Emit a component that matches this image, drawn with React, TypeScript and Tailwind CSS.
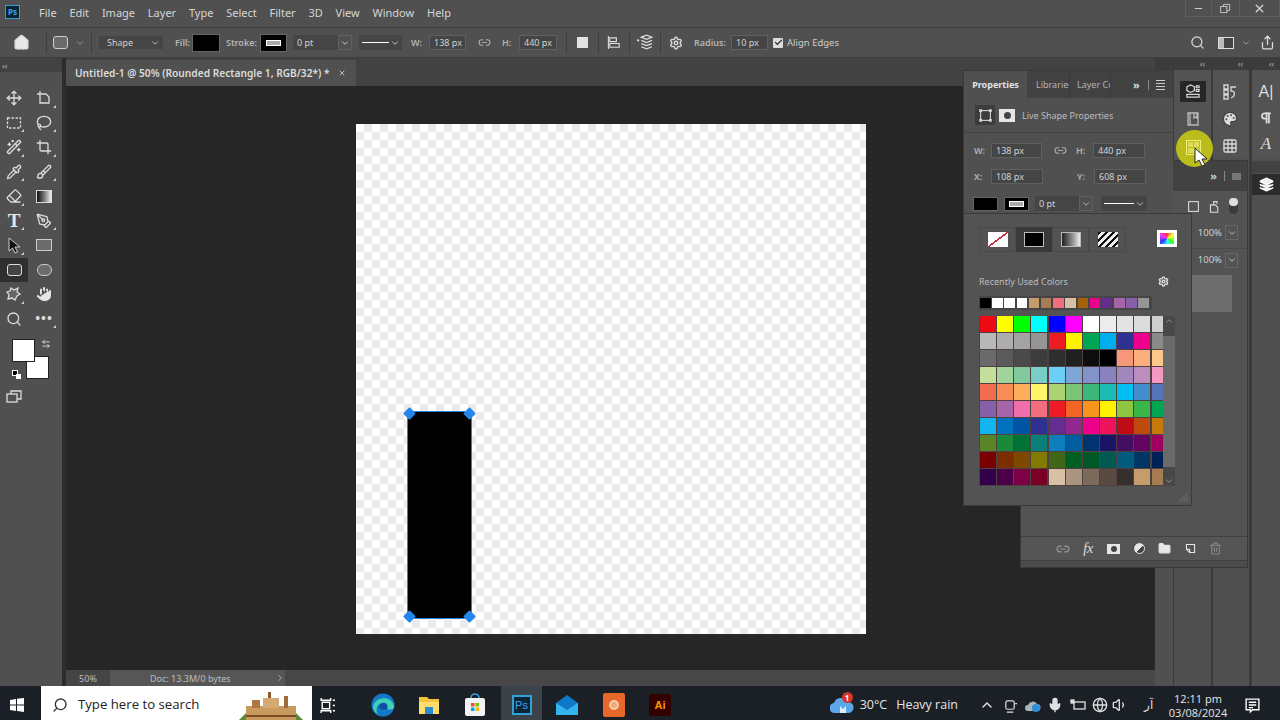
import React from "react";
import {
  Brush,
  ChevronDown,
  ChevronRight,
  ChevronUp,
  Crop,
  Eraser,
  Hand,
  Lasso,
  Link2,
  Mic,
  Minus,
  Move,
  PenTool,
  Pipette,
  Search,
  Settings,
  Share,
  Volume1,
  Globe,
  WandSparkles,
  X,
  Home,
  Check,
  ArrowLeftRight,
  Palette,
  Grid3x3,
  Pilcrow,
  Layers,
  Folder,
  Trash2,
} from "lucide-react";

const MENU = ["File", "Edit", "Image", "Layer", "Type", "Select", "Filter", "3D", "View", "Window", "Help"];

const RECENT = ["#000000", "#ffffff", "#ffffff", "#ffffff", "#c69c6d", "#a67c52", "#f26d7d", "#d7c0a4", "#a36209", "#ec008c", "#662d91", "#a864a8", "#855fa8", "#959595"];

const SWATCHES = [
  ["#ed0a12", "#ffff00", "#00ff00", "#00ffff", "#0000ff", "#ff00ff", "#ffffff", "#ececec", "#e3e3e3", "#dcdcdc", "#cfcfcf"],
  ["#b8b8b8", "#adadad", "#a3a3a3", "#959595", "#ed1c24", "#fff200", "#00a651", "#00aeef", "#2e3192", "#ec008c", "#8a8a8a"],
  ["#6a6a6a", "#5a5a5a", "#4a4a4a", "#3c3c3c", "#2e2e2e", "#202020", "#0d0d0d", "#000000", "#f7977a", "#fbaf7d", "#fdc68a"],
  ["#c4df9b", "#a3d39c", "#82ca9d", "#7bcdc8", "#6dcff6", "#7ea7d8", "#8493ca", "#8882be", "#a187be", "#bc8dbf", "#f49ac2"],
  ["#f26c4f", "#f68e56", "#fbaf5d", "#fff568", "#acd373", "#7cc576", "#3cb878", "#1cbbb4", "#00bff3", "#448ccb", "#5574b9"],
  ["#855fa8", "#a864a8", "#f06eaa", "#f26d7d", "#ed1c24", "#f26522", "#f7941d", "#fff200", "#8dc63f", "#39b54a", "#00a651"],
  ["#12b5f0", "#0072bc", "#0054a6", "#2e3192", "#662d91", "#92278f", "#ec008c", "#ed145b", "#c00a16", "#bf4a10", "#c77a0a"],
  ["#598527", "#1a8a3a", "#007236", "#0b8078", "#0e7ebc", "#005e9e", "#003471", "#1b1464", "#440e62", "#630460", "#9e005d"],
  ["#790000", "#7b2e00", "#7d4900", "#827b00", "#406618", "#005e20", "#005826", "#005952", "#005b7f", "#003663", "#002157"],
  ["#32004b", "#4b0049", "#7b0046", "#7a0026", "#d7c0a4", "#a99580", "#7d6b59", "#594a42", "#362f2d", "#c69c6d", "#a67c52"],
];

// Small drawn icons that the packages do not have
const Svg: React.FC<{ size?: number; children: React.ReactNode; className?: string }> = ({ size = 16, children, className }) => (
  <svg width={size} height={size} viewBox="0 0 16 16" fill="none" stroke="currentColor" strokeWidth="1.3" className={`shrink-0 ${className ?? ""}`}>
    {children}
  </svg>
);

const Divider: React.FC<{ ml: string }> = ({ ml }) => <div className={`h-[22px] w-px shrink-0 bg-[#3f3f3f] ${ml}`} />;

const Label: React.FC<{ text: string; className?: string }> = ({ text, className }) => (
  <span className={`shrink-0 whitespace-nowrap text-[9px] leading-none text-[#b4b4b4] font-semibold ${className ?? ""}`}>{text}</span>
);

const Field: React.FC<{ text: string; className?: string }> = ({ text, className }) => (
  <div className={`flex h-[15px] shrink-0 items-center border border-[#5f5f5f] bg-[#454545] pl-[4px] text-[9px] leading-none text-[#d2d2d2] ${className ?? ""}`}>
    {text}
  </div>
);

const StrokeSwatch: React.FC<{ className?: string }> = ({ className }) => (
  <div className={`flex shrink-0 items-center justify-center border border-[#666] bg-black ${className ?? ""}`}>
    <div className="h-[6px] w-[15px] border border-white bg-[#aaa]" />
  </div>
);

const Tool: React.FC<{ children: React.ReactNode; active?: boolean; corner?: boolean }> = ({ children, active, corner }) => (
  <div className={`relative flex h-[24.5px] items-center justify-center text-[#dcdcdc] ${active ? "bg-[#2f2f2f]" : ""}`}>
    {children}
    {corner && <div className="absolute bottom-[3px] right-[4px] h-0 w-0 border-b-[3px] border-l-[3px] border-b-[#ccc] border-l-transparent" />}
  </div>
);

const DockHeader: React.FC<{ className?: string }> = ({ className }) => (
  <div className={`flex h-[12px] items-center justify-end bg-[#3c3c3c] pr-[6px] text-[8px] leading-none text-[#bbb] ${className ?? ""}`}>
    ‹‹
  </div>
);

const ToolBar: React.FC = () => (
  <div className="flex w-[66px] flex-col border-r-[4px] border-[#2c2c2c] bg-[#505050]">
    <div className="flex h-[14px] items-center bg-[#424242] pl-[2px] text-[9px] leading-none text-[#bbb]">‹‹</div>
    <div className="grid w-[60px] grid-cols-[28px_32px] pt-[14px]">
      <Tool><Move size={16} /></Tool>
      <Tool corner>
        <Svg><path d="M4 1v3M1 4h3M4 4h6l3 3v6H4z" /></Svg>
      </Tool>
      <Tool corner>
        <Svg><rect x="1.5" y="3" width="13" height="10" strokeDasharray="2.4 1.6" /></Svg>
      </Tool>
      <Tool corner><Lasso size={16} /></Tool>
      <Tool corner><WandSparkles size={16} /></Tool>
      <Tool corner><Crop size={16} /></Tool>
      <Tool corner><Pipette size={16} /></Tool>
      <Tool corner><Brush size={16} /></Tool>
      <Tool corner><Eraser size={16} /></Tool>
      <Tool>
        <div className="h-[13px] w-[16px] border border-[#ddd] bg-gradient-to-r from-[#111] to-[#eee]" />
      </Tool>
      <Tool corner>
        <span className="font-['Liberation_Serif',serif] text-[19px] font-bold leading-none text-[#e6e6e6]">T</span>
      </Tool>
      <Tool corner><PenTool size={16} /></Tool>
      <Tool corner>
        <svg width="14" height="17" viewBox="0 0 14 17">
          <path d="M2 1v13l3.500-3 2.500 5 2.500-1-2.500-5H13z" fill="#111" stroke="#ccc" strokeWidth="1" />
        </svg>
      </Tool>
      <Tool>
        <div className="h-[12px] w-[16px] border border-[#ccc] bg-[#6c6c6c]" />
      </Tool>
      <Tool active>
        <div className="h-[12px] w-[15px] rounded-[3px] border border-[#ddd] bg-[#444]" />
      </Tool>
      <Tool>
        <div className="h-[12px] w-[15px] rounded-full border border-[#ccc] bg-[#6c6c6c]" />
      </Tool>
      <Tool corner>
        <Svg>
          <path d="M5 2l3 2 4-2-1 4 3 2-3 2-2 4-3-2-4 1 1-4-2-3 3-1z" fill="#666" />
        </Svg>
      </Tool>
      <Tool><Hand size={18} fill="#e6e6e6" strokeWidth={1.4} className="text-[#505050]" /></Tool>
      <Tool><Search size={16} /></Tool>
      <Tool corner><span className="text-[13px] font-bold leading-none tracking-[1px]">•••</span></Tool>
    </div>
    <div className="relative ml-[12px] mt-[8px] h-[42px] w-[38px]">
      <div className="absolute left-[14px] top-[17px] h-[23px] w-[23px] border border-[#222] bg-white" />
      <div className="absolute left-0 top-0 h-[23px] w-[23px] border border-[#222] bg-white" />
      <ArrowLeftRight size={10} className="absolute left-[29px] top-[0px] text-[#e6e6e6]" />
      <div className="absolute left-[0px] top-[31px] h-[6px] w-[6px] border border-white bg-black" />
      <div className="absolute left-[4px] top-[35px] h-[5px] w-[5px] bg-white" />
    </div>
    <div className="ml-[6px] mt-[8px] text-[#dcdcdc]">
      <Svg><rect x="1" y="5" width="10" height="8" /><path d="M5 5V2h10v8h-4" /></Svg>
    </div>
  </div>
);

const OptionsBar: React.FC = () => (
  <div className="flex h-[31px] items-center border-y border-[#3e3e3e] bg-[#505050] text-[#dcdcdc]">
    <Home size={17} fill="#e8e8e8" className="ml-[13px] shrink-0" />
    <Divider ml="ml-[16px]" />
    <div className="ml-[6px] h-[13px] w-[15px] shrink-0 rounded-[3px] border border-[#cfcfcf] bg-[#6b6b6b]" />
    <ChevronDown size={10} className="ml-[7px] shrink-0 text-[#aaa]" />
    <Divider ml="ml-[6px]" />
    <div className="ml-[7px] flex h-[13px] w-[64px] shrink-0 items-center justify-between bg-[#454545] pl-[8px] pr-[3px] text-[9px] leading-none text-[#cfcfcf]">
      Shape <ChevronDown size={10} />
    </div>
    <Label text="Fill:" className="ml-[12px] w-[13px]" />
    <div className="ml-[4px] h-[18px] w-[28px] shrink-0 border border-[#666] bg-black" />
    <Label text="Stroke:" className="ml-[6px] w-[29px]" />
    <StrokeSwatch className="ml-[5px] h-[18px] w-[27px]" />
    <Field text="0 pt" className="ml-[6px] w-[45px] border-0 pl-[3px]" />
    <div className="flex h-[15px] w-[14px] shrink-0 items-center justify-center border border-[#5f5f5f]"><ChevronDown size={10} /></div>
    <div className="ml-[7px] flex h-[15px] w-[43px] shrink-0 items-center justify-between bg-[#454545] pl-[3px] pr-[2px]">
      <div className="h-[1.5px] w-[27px] bg-white" /><ChevronDown size={10} />
    </div>
    <Label text="W:" className="ml-[9px] w-[11px]" />
    <Field text="138 px" className="ml-[7px] w-[37px]" />
    <Link2 size={13} className="ml-[12px] shrink-0 text-[#aaa]" />
    <Label text="H:" className="ml-[11px] w-[10px]" />
    <Field text="440 px" className="ml-[7px] w-[38px]" />
    <Divider ml="ml-[9px]" />
    <div className="ml-[10px] h-[11px] w-[11px] shrink-0 bg-[#e2e2e2]" />
    <Divider ml="ml-[10px]" />
    <Svg size={15} className="ml-[8px]">
      <path d="M1.5 1v14M3 3h7v4H3zM3 9h10v4H3z" strokeWidth="1.2" />
    </Svg>
    <Divider ml="ml-[7px]" />
    <Svg size={17} className="ml-[6px]">
      <path d="M5 3l5-2 5 2-5 2zM5 6l5 2 5-2M5 9l5 2 5-2M5 12l5 2 5-2M1 6h2M2 5v2" strokeWidth="1.2" />
    </Svg>
    <Divider ml="ml-[7px]" />
    <Settings size={14} className="ml-[8px] shrink-0" strokeWidth={2.4} />
    <Label text="Radius:" className="ml-[11px] w-[31px]" />
    <Field text="10 px" className="ml-[6px] w-[37px]" />
    <div className="ml-[5px] flex h-[10px] w-[10px] shrink-0 items-center justify-center rounded-[1px] bg-[#dcdcdc]">
      <Check size={9} strokeWidth={3.5} className="text-[#333]" />
    </div>
    <span className="ml-[4px] whitespace-nowrap text-[9.5px] leading-none text-[#cfcfcf]">Align Edges</span>
    <div className="flex-1" />
    <Search size={15} />
    <div className="ml-[13px] h-[12px] w-[16px] border border-[#ddd] bg-[#444]">
      <div className="h-full w-[5px] bg-[#bbb]" />
    </div>
    <ChevronDown size={10} className="ml-[7px] text-[#aaa]" />
    <Share size={15} className="ml-[9px] mr-[5px]" />
  </div>
);

const Canvas: React.FC = () => (
  <div className="flex flex-1 items-center justify-center bg-[#262626] pt-[2px]">
    <div className="relative h-[510px] w-[510px] bg-[repeating-conic-gradient(#ebebeb_0_25%,#ffffff_0_50%)] bg-[length:16px_16px]">
      <div className="absolute left-[51px] top-[287px] h-[208px] w-[65px] rounded-[8px] border border-[#2d83e0] bg-black" />
      <div className="absolute left-[49px] top-[285px] h-[9px] w-[9px] rotate-45 rounded-[1px] bg-[#2586ea]" />
      <div className="absolute left-[109px] top-[285px] h-[9px] w-[9px] rotate-45 rounded-[1px] bg-[#2586ea]" />
      <div className="absolute left-[49px] top-[488px] h-[9px] w-[9px] rotate-45 rounded-[1px] bg-[#2586ea]" />
      <div className="absolute left-[109px] top-[488px] h-[9px] w-[9px] rotate-45 rounded-[1px] bg-[#2586ea]" />
    </div>
  </div>
);

const PropertiesPanel: React.FC = () => (
  <div className="absolute left-[963px] top-[70px] h-[144px] w-[210px] border-l border-t border-[#3a3a3a] bg-[#505050]">
    <div className="flex h-[27px] items-center bg-[#424242] text-[9px] leading-none">
      <div className="flex h-full w-[63px] items-center justify-center bg-[#505050] font-bold text-[#e2e2e2]">Properties</div>
      <div className="flex h-full w-[43px] items-center overflow-hidden whitespace-nowrap border-r border-[#3a3a3a] pl-[9px] text-[#b4b4b4]">Libraries</div>
      <div className="flex h-full w-[41px] items-center overflow-hidden whitespace-nowrap border-r border-[#3a3a3a] pl-[7px] text-[#b4b4b4]">Layer Comps</div>
      <span className="ml-[22px] text-[11px] font-bold text-[#ddd]">»</span>
      <div className="ml-[8px] h-[10px] w-px bg-[#888]" />
      <div className="ml-[7px] flex w-[9px] flex-col gap-[2px]">
        <div className="h-px bg-[#ccc]" /><div className="h-px bg-[#ccc]" /><div className="h-px bg-[#ccc]" /><div className="h-px bg-[#ccc]" />
      </div>
    </div>
    <div className="flex h-[35px] items-center border-b border-[#424242] pl-[11px]">
      <div className="flex h-[20px] w-[20px] items-center justify-center bg-[#3c3c3c] text-[#ddd]">
        <Svg size={13}><rect x="2" y="2" width="12" height="12" /><path d="M1 1h2v2H1zM13 1h2v2h-2zM1 13h2v2H1zM13 13h2v2h-2z" /></Svg>
      </div>
      <div className="ml-[4px] flex h-[13px] w-[16px] items-center justify-center bg-[#e6e6e6]"><div className="h-[7px] w-[7px] rounded-full bg-[#444]" /></div>
      <span className="ml-[7px] text-[9px] leading-none text-[#bdbdbd]">Live Shape Properties</span>
    </div>
    <div className="flex items-center pt-[10px] pl-[10px]">
      <Label text="W:" className="w-[17px]" />
      <Field text="138 px" className="w-[51px]" />
      <Link2 size={13} className="ml-[12px] text-[#aaa]" />
      <Label text="H:" className="ml-[9px] w-[17px]" />
      <Field text="440 px" className="w-[52px]" />
    </div>
    <div className="flex items-center pt-[11px] pl-[10px]">
      <Label text="X:" className="w-[17px]" />
      <Field text="108 px" className="w-[52px]" />
      <Label text="Y:" className="ml-[34px] w-[17px]" />
      <Field text="608 px" className="w-[52px]" />
    </div>
    <div className="flex items-center pt-[12px] pl-[9px]">
      <div className="h-[14px] w-[25px] border border-[#666] bg-black" />
      <StrokeSwatch className="ml-[6px] h-[14px] w-[25px]" />
      <Field text="0 pt" className="ml-[6px] w-[44px] border-0" />
      <div className="flex h-[15px] w-[14px] items-center justify-center border border-[#5f5f5f] text-[#ccc]"><ChevronDown size={10} /></div>
      <div className="ml-[8px] flex h-[15px] w-[46px] items-center justify-between bg-[#454545] pl-[3px] pr-[2px] text-[#ccc]">
        <div className="h-[1.5px] w-[30px] bg-white" /><ChevronDown size={10} />
      </div>
    </div>
  </div>
);

const ColorPopover: React.FC = () => (
  <div className="absolute left-[963px] top-[213px] flex h-[293px] w-[229px] flex-col border border-[#3a3a3a] bg-[#535353] pl-[15px]">
    <div className="flex pt-[13px]">
      <div className="flex h-[25px] w-[37px] items-center justify-center border border-[#4a4a4a]">
        <div className="h-[15px] w-[20px] bg-[linear-gradient(to_top_left,#fff_47%,#c03040_47%,#c03040_53%,#fff_53%)]" />
      </div>
      <div className="flex h-[25px] w-[36px] items-center justify-center bg-[#3a3a3a]">
        <div className="h-[15px] w-[20px] border border-[#bbb] bg-black" />
      </div>
      <div className="flex h-[25px] w-[37px] items-center justify-center border border-[#4a4a4a]">
        <div className="h-[15px] w-[20px] border border-[#bbb] bg-gradient-to-r from-[#222] to-[#eee]" />
      </div>
      <div className="flex h-[25px] w-[37px] items-center justify-center border border-[#4a4a4a]">
        <div className="h-[15px] w-[20px] bg-[repeating-linear-gradient(135deg,#111_0_2.5px,#eee_2.5px_5px)]" />
      </div>
      <div className="ml-[31px] mt-[3px] flex h-[17px] w-[20px] items-center justify-center bg-white">
        <div className="h-[11px] w-[14px] bg-[conic-gradient(#f33,#ff3,#3f3,#3ff,#33f,#f3f,#f33)]" />
      </div>
    </div>
    <div className="flex items-center pt-[24px]">
      <span className="w-[88px] whitespace-nowrap text-[9px] leading-none text-[#bdbdbd]">Recently Used Colors</span>
      <Settings size={11} strokeWidth={3} className="ml-[91px] text-[#ddd]" />
    </div>
    <div className="mt-[9px] flex h-[14px] w-[173px] items-center gap-[1.7px] bg-[#454545] pl-[1px]">
      {RECENT.map((color, i) => (
        <div key={i} className="h-[10px] w-[10.5px]" style={{ backgroundColor: color }} />
      ))}
    </div>
    <div className="mt-[6px] flex h-[170px]">
      <div className="flex w-[184px] flex-col gap-[1px] overflow-hidden bg-[#4d4141] pl-[1px]">
        {SWATCHES.map((row, r) => (
          <div key={r} className="flex gap-[1.2px]">
            {row.map((color, c) => (
              <div key={c} className={`h-[16px] ${c === 10 ? "w-[11.5px]" : "w-[16px]"}`} style={{ backgroundColor: color }} />
            ))}
          </div>
        ))}
      </div>
      <div className="flex w-[12px] flex-col items-center justify-between bg-[#484848] text-[#999]">
        <ChevronUp size={10} />
        <div className="h-[131px] w-full bg-[#6a6a6a]" />
        <ChevronDown size={10} />
      </div>
    </div>
    <Svg size={11} className="absolute bottom-[2px] right-[2px] text-[#777]"><path d="M2 14L14 2M6 15l9-9M10 15l5-5" /></Svg>
  </div>
);

const FooterSlot: React.FC<{ children: React.ReactNode }> = ({ children }) => (
  <div className="flex w-[25.5px] items-center justify-center">{children}</div>
);

const LayersPanel: React.FC = () => (
  <div className="absolute left-[1020px] top-[160px] flex h-[408px] w-[228px] flex-col border border-[#3a3a3a] bg-[#535353] text-[#cfcfcf]">
    <div className="flex h-[30px] shrink-0 items-center justify-end bg-[#424242] pr-[6px]">
      <span className="text-[11px] font-bold">»</span>
      <div className="ml-[7px] h-[10px] w-px bg-[#888]" />
      <div className="ml-[7px] h-[7px] w-[9px] bg-[#777]" />
    </div>
    <div className="flex h-[26px] items-center justify-end gap-[8px] pr-[9px] pt-[4px] text-[#ddd]">
      <Svg size={13}><rect x="2" y="2" width="12" height="12" /></Svg>
      <Svg size={13}><path d="M3 6h6l3 3v6H3zM7 6V2h4v3" /></Svg>
      <div className="flex h-[16px] w-[9px] flex-col items-center rounded-full bg-[#3c3c3c]"><div className="h-[8px] w-[9px] rounded-full bg-[#ddd]" /></div>
    </div>
    <div className="flex h-[32px] items-center justify-end gap-[3px] border-b border-[#484848] pr-[9px]">
      <span className="text-[9.5px] leading-none">100%</span>
      <div className="flex h-[15px] w-[13px] items-center justify-center border border-[#666]"><ChevronDown size={10} /></div>
    </div>
    <div className="flex h-[22px] items-center justify-end gap-[3px] pr-[9px]">
      <span className="text-[9.5px] leading-none">100%</span>
      <div className="flex h-[15px] w-[13px] items-center justify-center border border-[#666]"><ChevronDown size={10} /></div>
    </div>
    <div className="ml-[171px] mt-[4px] h-[37px] w-[40px] bg-[#6e6e6e]" />
    <div className="flex-1" />
    <div className="flex h-[25px] items-center border-y border-[#404040] bg-[#555] pl-[29px]">
      <FooterSlot><Link2 size={14} className="text-[#999]" /></FooterSlot>
      <FooterSlot><span className="font-['Liberation_Serif',serif] text-[14px] italic leading-none text-[#e2e2e2]">fx</span></FooterSlot>
      <FooterSlot><div className="flex h-[10px] w-[13px] items-center justify-center bg-[#e6e6e6]"><div className="h-[6px] w-[6px] rounded-full bg-[#444]" /></div></FooterSlot>
      <FooterSlot><div className="h-[11px] w-[11px] rounded-full border border-[#e6e6e6] bg-[linear-gradient(135deg,#e6e6e6_50%,#444_50%)]" /></FooterSlot>
      <FooterSlot><Folder size={13} fill="#e6e6e6" className="text-[#e6e6e6]" /></FooterSlot>
      <FooterSlot><Svg size={13} className="text-[#e6e6e6]"><path d="M3 3h10v10H7l-4-4zM3 9h4v4" /></Svg></FooterSlot>
      <FooterSlot><Trash2 size={13} className="text-[#888]" /></FooterSlot>
    </div>
    <div className="h-[6px] bg-[#4c4c4c]" />
  </div>
);

const RightDock: React.FC = () => (
  <div className="flex w-[125px] bg-[#3a3a3a]">
    <div className="flex w-[18px] flex-col">
      <div className="h-[12px] bg-[#3c3c3c]" />
      <div className="flex-1 bg-[#505050]" />
    </div>
    <div className="flex w-[38px] flex-col border-l border-[#3a3a3a]">
      <DockHeader />
      <div className="flex h-[88px] flex-col items-center bg-[#535353] pt-[11px] text-[#d8d8d8]">
        <div className="flex h-[21px] w-[26px] items-center justify-center rounded-[1px] bg-[#262626]">
          <Svg size={15}><path d="M2 3l4-2 4 2v4l-4 2-4-2zM12 2h3v2h-3zM12 6h3v2h-3zM2 11h13v3H2z" /></Svg>
        </div>
        <Svg size={16} className="mt-[9px] text-[#bbb]"><path d="M3 2h10v12H3zM5 2v12M9 2v5l1.500-1 1.500 1V2" /></Svg>
      </div>
      <div className="flex-1 bg-[#505050]" />
    </div>
    <div className="flex w-[38px] flex-col border-l-2 border-[#3a3a3a]">
      <DockHeader />
      <div className="flex h-[88px] flex-col items-center gap-[11px] bg-[#535353] pt-[14px] pr-[3px] text-[#d8d8d8]">
        <Svg size={16}><path d="M2 1h4v4H2zM2 6h4v4H2zM2 11h4v4H2zM14 3H9v4c4-1 5 5 0 7" /></Svg>
        <Palette size={16} fill="#ddd" className="text-[#444]" />
        <Grid3x3 size={16} />
      </div>
      <div className="flex-1 bg-[#505050]" />
    </div>
    <div className="flex w-[31px] flex-col border-l-[3px] border-[#3a3a3a] bg-[#505050]">
      <DockHeader />
      <div className="flex h-[88px] flex-col items-center bg-[#535353] pt-[14px] text-[#dcdcdc]">
        <span className="font-['Liberation_Sans',sans-serif] text-[16px] leading-none">A|</span>
        <Pilcrow size={14} className="mt-[11px]" strokeWidth={3} />
        <span className="mt-[10px] font-['Liberation_Serif',serif] text-[17px] italic leading-none">A</span>
      </div>
      <div className="mt-[3px] h-[12px] bg-[#424242]" />
      <div className="mt-[1px] flex h-[21px] items-center justify-center bg-[#2c2c2c] text-white">
        <Layers size={15} fill="#eee" />
      </div>
    </div>
  </div>
);

const Cursor: React.FC = () => (
  <div className="absolute left-[1176px] top-[130px] flex h-[37px] w-[37px] items-center justify-center rounded-full bg-[#bcbc1c]">
    <div className="-mt-[3px] -ml-[3px] grid h-[15px] w-[15px] grid-cols-2 gap-[1px] border border-[#f1ef75] p-[1px]">
      <div className="bg-[#dedb5a]" /><div className="bg-[#dedb5a]" /><div className="col-span-2 bg-[#dedb5a]" />
    </div>
    <svg width="15" height="20" viewBox="0 0 15 20" className="absolute left-[18px] top-[17px]">
      <path d="M1 1v15l4-3 3 6 3-1-3-6h5z" fill="#fff" stroke="#222" strokeWidth="1" />
    </svg>
  </div>
);

const TaskBar: React.FC = () => (
  <div className="flex h-[34px] items-center bg-[#1b2027] pt-[4px] font-['Open_Sans',sans-serif] text-white">
    <svg width="14" height="14" viewBox="0 0 14 14" className="ml-[10px]">
      <path d="M0 2l6-1v5.500H0zM7 .8L14 0v6.500H7zM0 7.500h6V13l-6-1zM7 7.500h7V14l-7-1z" fill="#fff" />
    </svg>
    <div className="ml-[17px] -mt-[4px] flex h-[34px] w-[271px] items-center overflow-hidden bg-white pt-[4px] text-[#222]">
      <Search size={16} className="ml-[11px] -scale-x-100 text-[#333]" />
      <span className="ml-[10px] w-[121px] whitespace-nowrap text-[13.2px] leading-none">Type here to search</span>
      <svg width="66" height="31" viewBox="0 0 66 31" className="ml-[39px]">
        <path d="M0 31l8-8h50l8 8z" fill="#5f8a3a" />
        <rect x="8" y="16" width="50" height="15" fill="#c99a5e" />
        <rect x="14" y="10" width="8" height="8" fill="#b0763f" />
        <rect x="30" y="2" width="3" height="16" fill="#8a5a2f" />
        <rect x="25" y="8" width="16" height="10" fill="#d4aa72" />
        <rect x="46" y="6" width="4" height="12" fill="#a06a38" />
        <rect x="8" y="25" width="50" height="2" fill="#7b4c24" />
      </svg>
    </div>
    <Svg size={17} className="ml-[7px] text-white"><path d="M2 1v2h9V1M2 15v-2h9v2M3 5h7v6H3zM13 3h2M13 8h2M13 13h2" /></Svg>
    {/* edge */}
    <svg width="24" height="24" viewBox="0 0 24 24" className="ml-[35px]">
      <circle cx="12" cy="12" r="11.500" fill="#1279c9" />
      <path d="M2 14C3 6 13 3 19 7c3 2 4 5 4 7 0 3-5 3-7 2 2-4-1-7-5-6-5 1-7 7-4 11-3-1-5-4-5-7z" fill="#3fd0b6" />
      <path d="M12 10c3-.5 5 2 4 6-3 1-6 1-8-1 0-3 2-4.500 4-5z" fill="#0f4f9e" />
    </svg>
    {/* explorer */}
    <svg width="22" height="22" viewBox="0 0 22 22" className="ml-[23px]">
      <path d="M1 3h8l2 2h10v15H1z" fill="#f5c33b" />
      <rect x="1" y="8" width="20" height="12" fill="#ffdc6b" />
      <rect x="7" y="13" width="8" height="7" fill="#2b8ccf" />
    </svg>
    {/* store */}
    <svg width="22" height="24" viewBox="0 0 22 24" className="ml-[24px]">
      <path d="M7 5a4 4 0 018 0" fill="none" stroke="#3aa0e0" strokeWidth="1.600" />
      <rect x="1" y="5" width="20" height="18" rx="2" fill="#f2f2f2" />
      <rect x="7" y="10" width="3.500" height="3.500" fill="#f25022" />
      <rect x="11.500" y="10" width="3.500" height="3.500" fill="#7fba00" />
      <rect x="7" y="14.500" width="3.500" height="3.500" fill="#00a4ef" />
      <rect x="11.500" y="14.500" width="3.500" height="3.500" fill="#ffb900" />
    </svg>
    <div className="ml-[15px] -mt-[4px] flex h-[34px] w-[41px] items-center justify-center bg-[#3c4249] pt-[4px]">
      <div className="flex h-[20px] w-[20px] items-center justify-center border-2 border-[#2fa3d8] bg-[#0c2433] font-['Liberation_Sans',sans-serif] text-[11px] leading-none text-[#31a8ff]">Ps</div>
    </div>
    {/* mail */}
    <svg width="24" height="22" viewBox="0 0 24 22" className="ml-[13px]">
      <path d="M1 9L12 1l11 8v12H1z" fill="#0f78c8" />
      <path d="M1 9l11 7 11-7v12H1z" fill="#33b4f0" />
    </svg>
    <div className="ml-[24px] flex h-[24px] w-[22px] items-center justify-center rounded-[2px] bg-[#e8672a]">
      <div className="h-[10px] w-[10px] rounded-full border-2 border-[#f7cdb0] bg-[#f3a877]" />
    </div>
    <div className="ml-[24px] flex h-[22px] w-[22px] items-center justify-center rounded-[2px] bg-[#330000] font-['Liberation_Sans',sans-serif] text-[11px] font-bold leading-none text-[#ff9a00]">Ai</div>
    <div className="flex-1" />
    <div className="relative mr-[6px]">
      <svg width="24" height="20" viewBox="0 0 24 20">
        <path d="M5 18a5 5 0 01-1-10 7 7 0 0113-1 5.500 5.500 0 012 11z" fill="#5aa8e8" />
        <path d="M10 11l3 3 3-3v7h-6z" fill="#dcecf8" />
      </svg>
      <div className="absolute left-[12px] top-[-3px] flex h-[11px] w-[11px] items-center justify-center rounded-full bg-[#d8342c] text-[8px] font-bold leading-none">1</div>
    </div>
    <span className="text-[12.5px] leading-none text-[#e6e6e6]">30°C</span>
    <span className="ml-[9px] text-[12.5px] leading-none text-[#e6e6e6]">Heavy rain</span>
    <ChevronUp size={16} className="ml-[21px] text-[#e6e6e6]" />
    <Svg size={15} className="ml-[8px] text-[#ddd]"><rect x="3" y="3" width="9" height="9" rx="2" /><path d="M4 15h7M13 6h2" /></Svg>
    <svg width="17" height="13" viewBox="0 0 17 13" className="ml-[6px]">
      <path d="M4 12a3 3 0 010-6 5 5 0 019-1 3.500 3.500 0 010 7z" fill="#aab4bd" />
      <circle cx="12" cy="9" r="4" fill="#2d8fd8" />
    </svg>
    <Mic size={16} fill="#e0e0e0" className="ml-[6px] text-[#e0e0e0]" />
    <Svg size={16} className="ml-[7px] text-[#ddd]"><rect x="4" y="5" width="11" height="7" /><rect x="1" y="3" width="3" height="3" fill="#ddd" /></Svg>
    <Globe size={16} className="ml-[6px] text-[#ddd]" />
    <Volume1 size={16} className="ml-[4px] text-[#ddd]" />
    <span className="ml-[16px] text-[12px] leading-none text-[#ddd]">آر</span>
    <div className="ml-[13px] flex w-[64px] flex-col items-center gap-[3px] text-[11px] leading-none text-[#e6e6e6]">
      <span>12:11 pm</span>
      <span>03/08/2024</span>
    </div>
    <Svg size={17} className="ml-[14px] mr-[19px] text-white">
      <path d="M2 2h12v10H8l-2 2v-2H2zM4.500 5h7M4.500 7.500h7M4.500 10h4" />
    </Svg>
  </div>
);

export default function App() {
  return (
    <div className="relative flex h-[720px] w-[1280px] flex-col overflow-hidden bg-[#505050] font-['Noto_Sans',sans-serif]">
      {/* Menu bar */}
      <div className="flex h-[27px] items-center bg-[#505050] pb-[3px] text-[11px] leading-none text-[#d6d6d6]">
        <div className="ml-[5px] flex h-[14px] w-[15px] items-center justify-center border border-[#2fa3d8] bg-[#0c2433] text-[8px] font-bold leading-none text-[#31a8ff]">Ps</div>
        <div className="ml-[19px] flex gap-[12.8px]">
          {MENU.map((m) => <span key={m}>{m}</span>)}
        </div>
        <div className="flex-1" />
        <div className="flex h-[17px] items-start self-start text-[#cfcfcf]">
          <div className="flex h-[17px] w-[27px] items-center justify-center border-x border-b border-[#5f5f5f]"><Minus size={11} strokeWidth={2.5} /></div>
          <div className="flex h-[17px] w-[27px] items-center justify-center border-b border-[#5f5f5f]">
            <Svg size={11}><rect x="1" y="5" width="9" height="9" /><path d="M5 5V2h9v9h-4" /></Svg>
          </div>
          <div className="flex h-[17px] w-[41px] items-center justify-center border-x border-b border-[#5f5f5f]"><X size={13} strokeWidth={2.5} /></div>
        </div>
      </div>
      <OptionsBar />

      <div className="flex flex-1">
        <ToolBar />
        <div className="flex flex-1 flex-col">
          <div className="flex h-[28px] items-end bg-[#424242]">
            <div className="flex h-[26px] w-[290px] items-center whitespace-nowrap bg-[#505050] pl-[9px] text-[10.2px] font-semibold leading-none text-[#dcdcdc]">
              Untitled-1 @ 50% (Rounded Rectangle 1, RGB/32*) *
              <X size={8} strokeWidth={3} className="ml-[8px] text-[#bbb]" />
            </div>
          </div>
          <Canvas />
          <div className="flex h-[16px] items-center bg-[#474747] text-[9px] leading-none text-[#bdbdbd]">
            <div className="flex h-full w-[44px] items-center justify-center bg-[#454545]">50%</div>
            <div className="flex h-full w-[175px] items-center bg-[#565656] pl-[40px]">
              Doc: 13.3M/0 bytes
              <ChevronRight size={10} className="ml-[44px]" />
            </div>
          </div>
        </div>
        <RightDock />
      </div>

      <TaskBar />

      <LayersPanel />
      <PropertiesPanel />
      <ColorPopover />
      <Cursor />
    </div>
  );
}
